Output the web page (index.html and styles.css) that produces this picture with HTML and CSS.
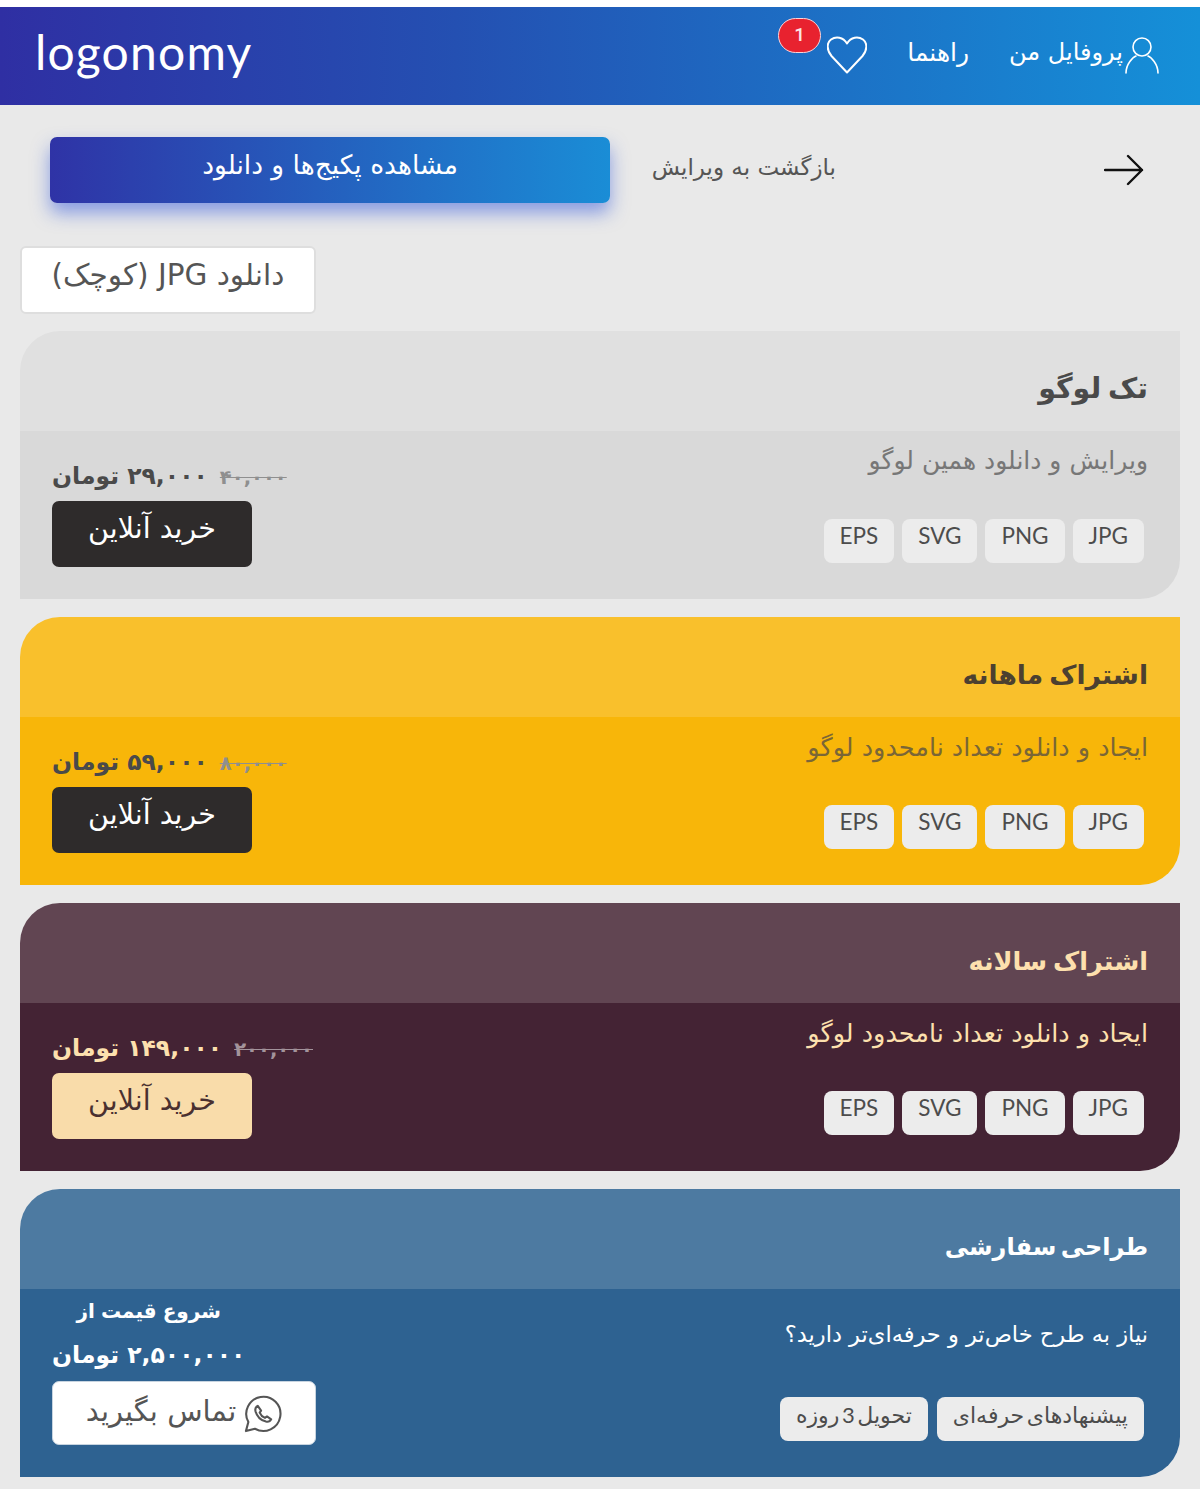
FILE: index.html
```html
<!DOCTYPE html>
<html lang="fa" dir="rtl">
<head>
<meta charset="utf-8">
<title>logonomy</title>
<link rel="stylesheet" href="styles.css">
</head>
<body>
<header class="topbar">
  <a class="nav-item profile">
    <svg class="icon-user" viewBox="0 0 36 38" fill="none" stroke="currentColor" stroke-width="1.6" stroke-linecap="round"><circle cx="18" cy="11" r="9"/><path d="M2 37c0-9 7-16 10-17M34 37c0-9-7-16-10-17"/></svg>
    <span>پروفایل من</span>
  </a>
  <a class="nav-item guide">راهنما</a>
  <a class="fav">
    <svg class="icon-heart" viewBox="0 0 40 38" fill="none" stroke="currentColor" stroke-width="2" stroke-linejoin="round"><path d="M20 36.500 4.500 20C-.5 14-.5 7 4 3.500 9 0 16 1 20 7.500 24 1 31 0 36 3.500c4.500 3.500 4.500 10.500-.5 16.500z"/></svg>
    <span class="badge">1</span>
  </a>
  <a class="logo" dir="ltr">logonomy</a>
</header>

<section class="toolbar">
  <svg class="icon-arrow" viewBox="0 0 40 32" fill="none" stroke="#111" stroke-width="2.400" stroke-linecap="round" stroke-linejoin="round"><path d="M1 16h37M24 2l14 14-14 14"/></svg>
  <a class="back">بازگشت به ویرایش</a>
  <a class="cta">مشاهده پکیج‌ها و دانلود</a>
</section>

<div class="download-row"><a class="download">دانلود JPG (کوچک)</a></div>

<main class="plans">
  <article class="plan plan-gray">
    <h2 class="plan-title">تک لوگو</h2>
    <div class="plan-body">
      <div class="plan-info">
        <p class="plan-desc">ویرایش و دانلود همین لوگو</p>
        <ul class="tags"><li>JPG</li><li>PNG</li><li>SVG</li><li>EPS</li></ul>
      </div>
      <div class="plan-buy">
        <p class="price"><s class="old">۴۰,۰۰۰</s><span class="amount">۲۹,۰۰۰ تومان</span></p>
        <a class="buy">خرید آنلاین</a>
      </div>
    </div>
  </article>

  <article class="plan plan-yellow">
    <h2 class="plan-title">اشتراک ماهانه</h2>
    <div class="plan-body">
      <div class="plan-info">
        <p class="plan-desc">ایجاد و دانلود تعداد نامحدود لوگو</p>
        <ul class="tags"><li>JPG</li><li>PNG</li><li>SVG</li><li>EPS</li></ul>
      </div>
      <div class="plan-buy">
        <p class="price"><s class="old">۸۰,۰۰۰</s><span class="amount">۵۹,۰۰۰ تومان</span></p>
        <a class="buy">خرید آنلاین</a>
      </div>
    </div>
  </article>

  <article class="plan plan-plum">
    <h2 class="plan-title">اشتراک سالانه</h2>
    <div class="plan-body">
      <div class="plan-info">
        <p class="plan-desc">ایجاد و دانلود تعداد نامحدود لوگو</p>
        <ul class="tags"><li>JPG</li><li>PNG</li><li>SVG</li><li>EPS</li></ul>
      </div>
      <div class="plan-buy">
        <p class="price"><s class="old">۲۰۰,۰۰۰</s><span class="amount">۱۴۹,۰۰۰ تومان</span></p>
        <a class="buy">خرید آنلاین</a>
      </div>
    </div>
  </article>

  <article class="plan plan-blue">
    <h2 class="plan-title">طراحی سفارشی</h2>
    <div class="plan-body">
      <div class="plan-info">
        <p class="plan-desc">نیاز به طرح خاص‌تر و حرفه‌ای‌تر دارید؟</p>
        <ul class="tags"><li>پیشنهادهای حرفه‌ای</li><li>تحویل 3 روزه</li></ul>
      </div>
      <div class="plan-buy">
        <div class="price-stack">
          <p class="from">شروع قیمت از</p>
          <p class="amount">۲,۵۰۰,۰۰۰ تومان</p>
        </div>
        <a class="contact">
          <svg class="icon-wa" viewBox="0 0 40 40" fill="none" stroke="#555" stroke-width="2.200" stroke-linejoin="round" stroke-linecap="round"><path d="M2 38l2.600-9.500A18 18 0 1 1 11.500 35.500z"/><path d="M14.500 11.500c-2 1-3 3-2.400 5.500 1.500 5.500 5.500 9.500 11 11 2.500.6 4.500-.4 5.500-2.400l-4.400-3-2.200 1.500c-2.500-1-4.500-3-5.500-5.500l1.500-2.200z"/></svg>
          <span class="contact-label">تماس بگیرید</span>
        </a>
      </div>
    </div>
  </article>
</main>
</body>
</html>
```

FILE: styles.css
```css
* { box-sizing: border-box; }
html { background: #e9e9e9; }
body {
  margin: 0;
  padding-top: 7px;
  background: linear-gradient(#fff 7px, #e9e9e9 7px);
  font-family: "DejaVu Sans", "Noto Sans", sans-serif;
  color: #4a4a4a;
  min-height: 1489px;
}
p, h2, ul { margin: 0; padding: 0; }
ul { list-style: none; }

.topbar {
  height: 98px;
  padding: 0 40px 0 35px;
  display: flex;
  align-items: center;
  color: #fff;
  background: linear-gradient(90deg, #2f2fa3 0%, #2450b2 38%, #1590d8 100%);
}
.nav-item { display: flex; align-items: center; font-weight: 400; }
.profile { gap: 1px; margin-top: -8px; font-size: 24px; }
.icon-user { width: 36px; height: 38px; margin-top: 5px; }
.guide { margin-right: 40px; margin-top: -8px; font-size: 25px; }
.fav { position: relative; display: block; margin-right: 40px; height: 38px; margin-top: -2px; }
.icon-heart { width: 40px; height: 38px; display: block; }
.badge {
  position: absolute;
  left: -49px;
  top: -18px;
  width: 43px;
  height: 35px;
  border: 1px solid #fbd3d6;
  border-radius: 18px;
  background: #e8222f;
  color: #fbe6e6;
  font: 500 19px/32px "Roboto", sans-serif;
  text-align: center;
}
.logo {
  margin-right: auto;
  font: 400 48px/1 "Lato", sans-serif;
  color: #fff;
  letter-spacing: 1.200px;
  margin-top: -8px;
}

.toolbar {
  height: 141px;
  padding: 32px 56px 0 50px;
  display: flex;
  align-items: flex-start;
}
.icon-arrow { width: 40px; height: 32px; margin-top: 17px; }
.back { margin-right: 268px; margin-top: 14px; font-size: 23px; line-height: 32px; color: #555; }
.cta {
  margin-right: auto;
  width: 560px;
  height: 66px;
  border-radius: 7px;
  padding-top: 10px;
  text-align: center;
  color: #fff;
  font-size: 26.500px;
  line-height: 36px;
  background: linear-gradient(90deg, #2f33a6, #1a8dd6);
  box-shadow: 0 10px 18px rgba(40, 80, 220, .5);
}

.download-row { padding: 0 20px; display: flex; justify-content: flex-end; }
.download {
  width: 296px;
  height: 68px;
  background: #fff;
  border: 2px solid #dedede;
  border-radius: 6px;
  text-align: center;
  font-size: 29.500px;
  line-height: 54px;
  color: #555;
}

.plans { padding: 17px 20px 0; display: flex; flex-direction: column; gap: 18px; }
.plan { border-radius: 40px 0 40px 0; overflow: hidden; }
.plan-title { height: 100px; padding: 33px 32px 0; font-size: 26.500px; word-spacing: -3px; line-height: 50px; font-weight: 700; }
.plan-body { height: 168px; padding: 12px 32px 0; display: flex; justify-content: space-between; }
.plan-desc { font-size: 25.500px; line-height: 36px; }
.tags { display: flex; gap: 8px; margin: 40px 4px 0 0; }
.tags li {
  height: 44px;
  padding: 0 16px;
  border-radius: 8px;
  background: #ececec;
  color: #4c4c4c;
  font: 400 22.500px/33px "Lato", "DejaVu Sans", sans-serif;
}
.plan-buy { display: flex; flex-direction: column; align-items: flex-end; }
.price { display: flex; align-items: baseline; gap: 12px; margin-top: 15px; height: 43px; }
.amount { font-size: 23.500px; line-height: 36px; font-weight: 700; }
.old { font-size: 19.500px; font-weight: 700; color: #8f8f8f; }
.buy {
  width: 200px;
  height: 66px;
  border-radius: 7px;
  background: #2e2b2b;
  color: #fff;
  text-align: center;
  font-size: 28.500px;
  line-height: 56px;
}

.plan-gray .plan-title { background: #e0e0e0; color: #4a4a4a; font-size: 28.500px; }
.plan-gray .plan-body { background: #d9d9d9; }
.plan-gray .plan-desc { color: #777; font-size: 25px; }

.plan-yellow .plan-title { background: #f9c02c; color: #4c4030; }
.plan-yellow .plan-body { background: #f8b609; }
.plan-yellow .plan-desc { color: #7a6636; }

.plan-plum .plan-title { background: #614552; color: #fde0ae; font-size: 25.500px; }
.plan-plum .plan-body { background: #442334; }
.plan-plum .plan-desc { color: #fde0ae; }
.plan-plum .amount { color: #fde0ae; }
.plan-plum .old { color: #a3939b; }
.plan-plum .buy { background: #f9dcaa; color: #4a3030; }

.plan-blue .plan-title { background: #4d7aa1; color: #fff; font-size: 24px; word-spacing: -4px; }
.plan-blue .plan-body { background: #2e6291; height: 188px; padding-top: 27px; }
.plan-blue .plan-desc { color: #fff; font-size: 22.500px; }
.plan-blue .tags { margin-top: 45px; gap: 9px; }
.plan-blue .tags li { font-size: 22px; word-spacing: -3px; line-height: 36px; }
.plan-blue .plan-buy { margin-top: -27px; }
.price-stack { text-align: center; color: #fff; margin-top: 3px; height: 89px; }
.from { font-size: 20px; word-spacing: -1px; line-height: 38px; font-weight: 700; }
.price-stack .amount { line-height: 50px; }
.contact {
  width: 264px;
  height: 64px;
  border-radius: 7px;
  border: 1px solid #c7d4e0;
  background: #fff;
  color: #555;
  display: flex;
  align-items: center;
  justify-content: center;
  gap: 8px;
  font-size: 29px;
}
.contact-label { margin-top: -5px; }
.icon-wa { width: 38px; height: 38px; margin-top: 2px; }
```
